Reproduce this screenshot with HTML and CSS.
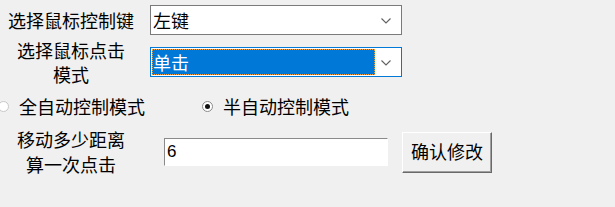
FILE: index.html
```html
<!DOCTYPE html>
<html lang="zh-CN">
  <head>
    <meta charset="UTF-8" />
    <title>鼠标设置</title>
    <link rel="stylesheet" href="styles.css">
  </head>
  <body>
    <div class="form">

      <!-- 控制键 -->
      <div class="row r1">
        <div class="cap">选择鼠标控制键</div>
        <div class="combo">
          <span class="val">左键</span>
          <svg class="arrow" width="10" height="6" viewBox="0 0 10 6"><path d="M0.5 0.5 L5 5 L9.5 0.5" fill="none" stroke="#606060" stroke-width="1.1"/></svg>
        </div>
      </div>

      <!-- 点击模式 -->
      <div class="row r2">
        <div class="cap">选择鼠标点击<br>模式</div>
        <div class="combo focus">
          <span class="val sel">单击</span>
          <svg class="arrow" width="10" height="6" viewBox="0 0 10 6"><path d="M0.5 0.5 L5 5 L9.5 0.5" fill="none" stroke="#606060" stroke-width="1.1"/></svg>
        </div>
      </div>

      <!-- radios -->
      <div class="row r3">
        <label class="radio"><span class="dot"></span>全自动控制模式</label>
        <label class="radio on"><span class="dot"></span>半自动控制模式</label>
      </div>

      <!-- 距离 -->
      <div class="row r4">
        <div class="cap">移动多少距离<br>算一次点击</div>
        <div class="txt">6</div>
        <button class="btn">确认修改</button>
      </div>

    </div>
  </body>
</html>
```

FILE: styles.css
```css
*{
    padding: 0px;
    margin: 0px;
    box-sizing: border-box;
}
body{
    background-color: #f0f0f0;
    font-family: "Noto Sans CJK SC", "Liberation Sans", sans-serif;
    font-size: 18px;
    color: #000;
    overflow: hidden;
}
.row{
    display: flex;
    align-items: center;
}
.r1{ height: 40px; }
.r2{ height: 44px; }
.r3{ height: 44px; }
.r4{ height: 48px; }

.cap{
    width: 142px;
    text-align: center;
    line-height: 24px;
    white-space: nowrap;
}
.r4 .cap{
    line-height: 25px;
}

/* combo boxes */
.combo{
    margin-left: 8px;
    width: 252px;
    height: 30px;
    background-color: #fff;
    border: 1px solid #7a7a7a;
    display: flex;
    align-items: center;
    position: relative;
}
.combo .val{
    line-height: 24px;
    padding-left: 2px;
}
.combo.focus{
    border-color: #0078d7;
    padding: 1px;
}
.combo .val.sel{
    background-color: #0078d7;
    color: #fff;
    width: 223px;
    height: 26px;
    line-height: 26px;
    padding-left: 1px;
    outline: 1px dotted #f0a040;
    outline-offset: -1px;
}
.arrow{
    position: absolute;
    right: 10px;
    top: 12px;
}

/* radio buttons */
.r3{
    margin-left: -2px;
}
.radio{
    display: flex;
    align-items: center;
    line-height: 24px;
}
.radio + .radio{
    margin-left: 57px;
}
.dot{
    width: 11px;
    height: 11px;
    border-radius: 50%;
    border: 1px solid #c8c8c8;
    background-color: #fff;
    margin-right: 10px;
    position: relative;
}
.radio.on .dot{
    border-color: #8a8a8a;
}
.radio.on .dot::after{
    content: "";
    position: absolute;
    left: 2px;
    top: 2px;
    width: 5px;
    height: 5px;
    border-radius: 50%;
    background-color: #111;
}

/* text box + button */
.txt{
    margin-left: 22px;
    width: 224px;
    height: 28px;
    background-color: #fff;
    border-top: 1px solid #8a8a8a;
    border-left: 1px solid #8a8a8a;
    border-right: 1px solid #fff;
    border-bottom: 1px solid #fff;
    font-family: "Liberation Sans", sans-serif;
    font-size: 17px;
    line-height: 26px;
    padding-left: 2px;
}
.btn{
    margin-left: 14px;
    width: 90px;
    height: 41px;
    background-color: #f0f0f0;
    border: 1px solid;
    border-color: #fff #696969 #696969 #fff;
    box-shadow: inset -1px -1px #a0a0a0;
    font-family: "Noto Sans CJK SC", sans-serif;
    font-size: 18px;
    color: #000;
    padding-bottom: 2px;
}
```
